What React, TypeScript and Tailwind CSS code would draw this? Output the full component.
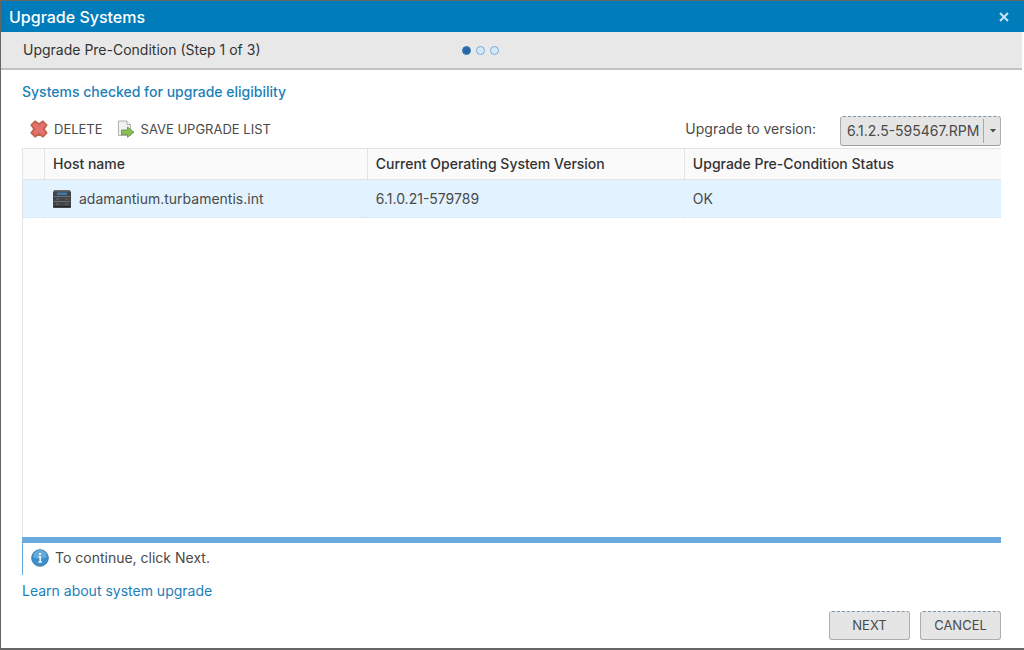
import { useState } from "react";

type System = {
  host: string;
  version: string;
  status: string;
};

const systems: System[] = [
  { host: "adamantium.turbamentis.int", version: "6.1.0.21-579789", status: "OK" },
];

const versions = ["6.1.2.5-595467.RPM"];

function DeleteIcon() {
  return (
    <svg width="18" height="18" viewBox="0 0 18 18" aria-hidden="true">
      <path
        d="M5 1.2 9 4 13 1.2 16.8 5 14 9 16.8 13 13 16.8 9 14 5 16.8 1.2 13 4 9 1.2 5Z"
        fill="#dc6862"
        stroke="#c0664e"
        strokeWidth="1.6"
        strokeLinejoin="round"
      />
      <path d="M5 5 13 13M13 5 5 13" stroke="#e4726f" strokeWidth="3.4" strokeLinecap="round" />
    </svg>
  );
}

function SaveListIcon() {
  return (
    <svg width="18" height="18" viewBox="0 0 18 18" aria-hidden="true">
      <path d="M1.5 1H10L13.5 4.5V15.5H1.5Z" fill="#f1f1f1" stroke="#b0b0b0" />
      <path d="M10 1V4.5H13.5" fill="#fff" stroke="#b0b0b0" />
      <path d="M4.5 10H10.5V7L17 12.2 10.5 17.3V14.5H4.5Z" fill="#8cbd58" stroke="#739f50" strokeLinejoin="round" />
    </svg>
  );
}

function ServerIcon() {
  return (
    <svg width="18" height="18" viewBox="0 0 18 18" aria-hidden="true">
      <path d="M1.5 0H16.5L18 2V17Q18 18 17 18H1Q0 18 0 17V2Z" fill="#424548" />
      <path d="M1.5 0H16.5L17.2 1.5H.8Z" fill="#696c6f" />
      <rect x="4" y="2.5" width="10" height="2.5" fill="#3f79a8" />
      <path d="M1 6.5H17M1 11.5H17" stroke="#6d7073" />
      <path d="M3 9H6M12 9H15M3 14H6M12 14H15" stroke="#65686b" />
      <path d="M0 16.5H18" stroke="#27292b" />
    </svg>
  );
}

function InfoIcon() {
  return (
    <svg width="18" height="18" viewBox="0 0 18 18" aria-hidden="true">
      <circle cx="9" cy="9" r="8.3" fill="#3c8ecb" stroke="#3b7dad" />
      <path d="M2 8A7 7 0 0 1 16 8Q9 11 2 8Z" fill="#66aadc" />
      <circle cx="9" cy="4.9" r="1.2" fill="#e4f0fa" />
      <path d="M7.4 7.8H9.2V13M7.2 13H11" fill="none" stroke="#e4f0fa" strokeWidth="1.6" />
    </svg>
  );
}

function StepDots({ current, total }: { current: number; total: number }) {
  return (
    <div className="flex gap-[5px]">
      {Array.from({ length: total }, (_, i) => (
        <span
          key={i}
          className={`size-[9px] rounded-full border ${
            i + 1 === current ? "border-[#3d7db8] bg-[#2866a6]" : "border-[#78addb] bg-[#d5e8f8]"
          }`}
        />
      ))}
    </div>
  );
}

export default function App() {
  const [version, setVersion] = useState(versions[0]);

  return (
    <div className="flex min-h-screen flex-col border-t border-b-2 border-l border-[#666] bg-white font-['Inter','Open_Sans',sans-serif] text-sm text-[#4a4a4a]">
      {/* Title bar */}
      <header className="flex h-[31px] items-center justify-between bg-[#007cbb] pr-[15px] pl-2 text-white">
        <h1 className="text-base font-medium">Upgrade Systems</h1>
        <button type="button" aria-label="Close">
          <svg width="10" height="10" viewBox="0 0 10 10" aria-hidden="true">
            <path d="M1 1 9 9M9 1 1 9" stroke="#c5e3f3" strokeWidth="2" />
          </svg>
        </button>
      </header>

      {/* Step bar */}
      <div className="mr-0.5 grid h-[38px] grid-cols-[1fr_auto_1fr] items-center border-b-2 border-[#c2c2c2] bg-[#e8e8e8] pr-[84px] pl-[22px]">
        <h2 className="text-[#333]">Upgrade Pre-Condition (Step 1 of 3)</h2>
        <StepDots current={1} total={3} />
      </div>

      <main className="flex grow flex-col pt-3 pr-[23px] pb-2 pl-[21px]">
        <h3 className="font-medium text-[#1b7fb8]">Systems checked for upgrade eligibility</h3>

        {/* Toolbar */}
        <div className="mt-3.5 flex h-8 items-start justify-between">
          <div className="flex h-[26px] items-center gap-3.5 pl-2 text-[13px]">
            <button type="button" className="flex items-center gap-1.5">
              <DeleteIcon />
              DELETE
            </button>
            <button type="button" className="flex items-center gap-1.5">
              <SaveListIcon />
              SAVE UPGRADE LIST
            </button>
          </div>
          <div className="flex items-start gap-6">
            <label htmlFor="version" className="leading-[26px]">Upgrade to version:</label>
            <div className="relative w-[161px]">
              <select
                id="version"
                value={version}
                onChange={(e) => setVersion(e.target.value)}
                className="h-[30px] w-full appearance-none rounded-[3px] border border-[#adadad] border-t-[#8295a5] border-b-[#a0a0a0] bg-[#e5e5e5] pl-[6px] [border-top-style:dashed]"
              >
                {versions.map((v) => (
                  <option key={v}>{v}</option>
                ))}
              </select>
              <span className="pointer-events-none absolute inset-y-[3px] right-0 flex w-[18px] items-center justify-center border-l border-[#a8a8a8]">
                <svg width="6" height="4" viewBox="0 0 6 4" aria-hidden="true">
                  <path d="M0 0H6L3 3.5Z" fill="#4a4a4a" />
                </svg>
              </span>
            </div>
          </div>
        </div>

        {/* Systems table */}
        <div className="grow border-t border-l border-[#e3e3e3]">
          <table className="w-full table-fixed border-separate border-spacing-0 text-left">
            <colgroup>
              <col className="w-[21px]" />
              <col className="w-[33%]" />
              <col />
              <col />
            </colgroup>
            <thead>
              <tr className="h-[31px] bg-[#fafafa] text-[#333] *:border-b *:border-[#e3e3e3]">
                <td />
                <th scope="col" className="border-l px-2 font-medium">Host name</th>
                <th scope="col" className="border-l px-2 font-medium">Current Operating System Version</th>
                <th scope="col" className="border-l px-2 font-medium">Upgrade Pre-Condition Status</th>
              </tr>
            </thead>
            <tbody>
              {systems.map((s) => (
                <tr key={s.host} className="h-[38px] bg-[#e3f2ff] *:border-b *:border-dotted *:border-[#d4dfe8]">
                  <td />
                  <td className="px-[9px]">
                    <div className="flex items-center gap-2">
                      <ServerIcon />
                      {s.host}
                    </div>
                  </td>
                  <td className="px-[9px]">{s.version}</td>
                  <td className="px-[9px]">{s.status}</td>
                </tr>
              ))}
            </tbody>
          </table>
        </div>

        <div className="flex h-[38px] items-center gap-1.5 border-t-6 border-l border-[#6aaadf] pb-0.5 pl-2">
          <InfoIcon />
          <p>To continue, click Next.</p>
        </div>

        <a href="#learn" className="mt-1.5 self-start text-[#1b7fb8]">
          Learn about system upgrade
        </a>

        <footer className="mt-2.5 flex justify-end gap-2.5 text-[13px]">
          <button
            type="button"
            className="h-[29px] w-[81px] rounded-[3px] border border-[#adadad] border-t-[#8295a5] bg-[#e5e5e5] [border-top-style:dashed]"
          >
            NEXT
          </button>
          <button
            type="button"
            className="h-[29px] w-[81px] rounded-[3px] border border-[#adadad] border-t-[#8295a5] bg-[#e5e5e5] [border-top-style:dashed]"
          >
            CANCEL
          </button>
        </footer>
      </main>
    </div>
  );
}
